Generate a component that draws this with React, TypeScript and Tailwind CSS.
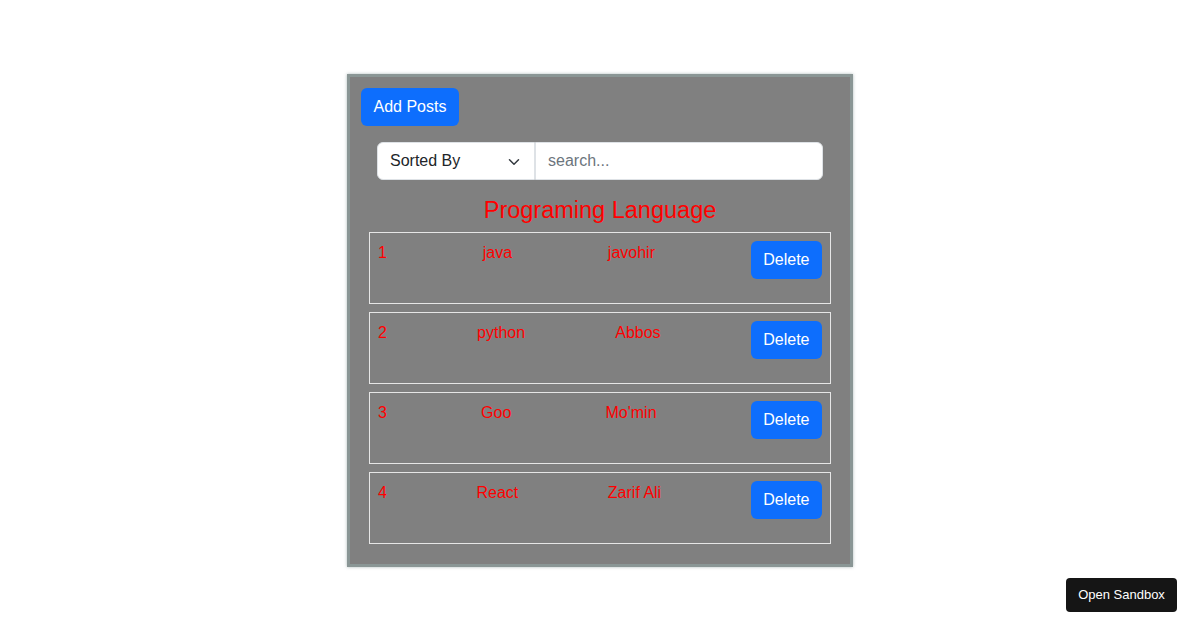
import React from "react";

const rows = [
  { id: 1, lang: "java", name: "javohir" },
  { id: 2, lang: "python", name: "Abbos" },
  { id: 3, lang: "Goo", name: "Mo'min" },
  { id: 4, lang: "React", name: "Zarif Ali" },
];

export default function App() {
  return (
    <div
      className="relative h-[630px] w-full bg-white overflow-hidden"
      style={{ fontFamily: '"Liberation Sans", Arial, sans-serif' }}
    >
      <div className="mx-auto mt-[74px] w-[506px] border-[3px] border-[#8a9695] bg-[#808080] shadow-[0_0_3px_rgba(120,140,140,0.6)] p-[11px] pb-[20px]">
        <button className="h-[38px] rounded-md bg-[#0d6efd] px-[12.5px] text-[16px] text-white">
          Add Posts
        </button>
        <div className="mx-[16px] mt-[16px] flex">
          <div className="relative flex h-[38px] w-[158px] items-center rounded-l-md border border-[#dee2e6] bg-white pl-[12px] text-[16px] text-[#212529]">
            Sorted By
            <svg
              className="absolute right-[12px] top-[13px]"
              width="16"
              height="12"
              viewBox="0 0 16 16"
            >
              <path
                d="m2 5 6 6 6-6"
                fill="none"
                stroke="#343a40"
                strokeWidth="2"
                strokeLinecap="round"
                strokeLinejoin="round"
              />
            </svg>
          </div>
          <div className="flex h-[38px] flex-1 items-center rounded-r-md border border-[#dee2e6] bg-white pl-[12px] text-[16px] text-[#6c757d]">
            search...
          </div>
        </div>
        <h4 className="mt-[16px] mb-[7px] text-center text-[23.5px] leading-[28.8px] text-[#ff0000]">
          Programing Language
        </h4>
        <div className="mx-[8px] flex flex-col gap-[8px]">
          {rows.map((r) => (
            <div
              key={r.id}
              className="flex h-[72px] items-start justify-between border border-[#e6e6e6] px-[8px] pt-[8px] text-[16px] leading-[24px] text-[#ff0000]"
            >
              <span>{r.id}</span>
              <span>{r.lang}</span>
              <span>{r.name}</span>
              <button className="h-[38px] rounded-md bg-[#0d6efd] px-[12.5px] text-[16px] text-white">
                Delete
              </button>
            </div>
          ))}
        </div>
      </div>
      <button className="absolute right-[23px] bottom-[18px] h-[34px] w-[111px] rounded-[4px] bg-[#151515] text-[13px] text-white">
        Open Sandbox
      </button>
    </div>
  );
}
